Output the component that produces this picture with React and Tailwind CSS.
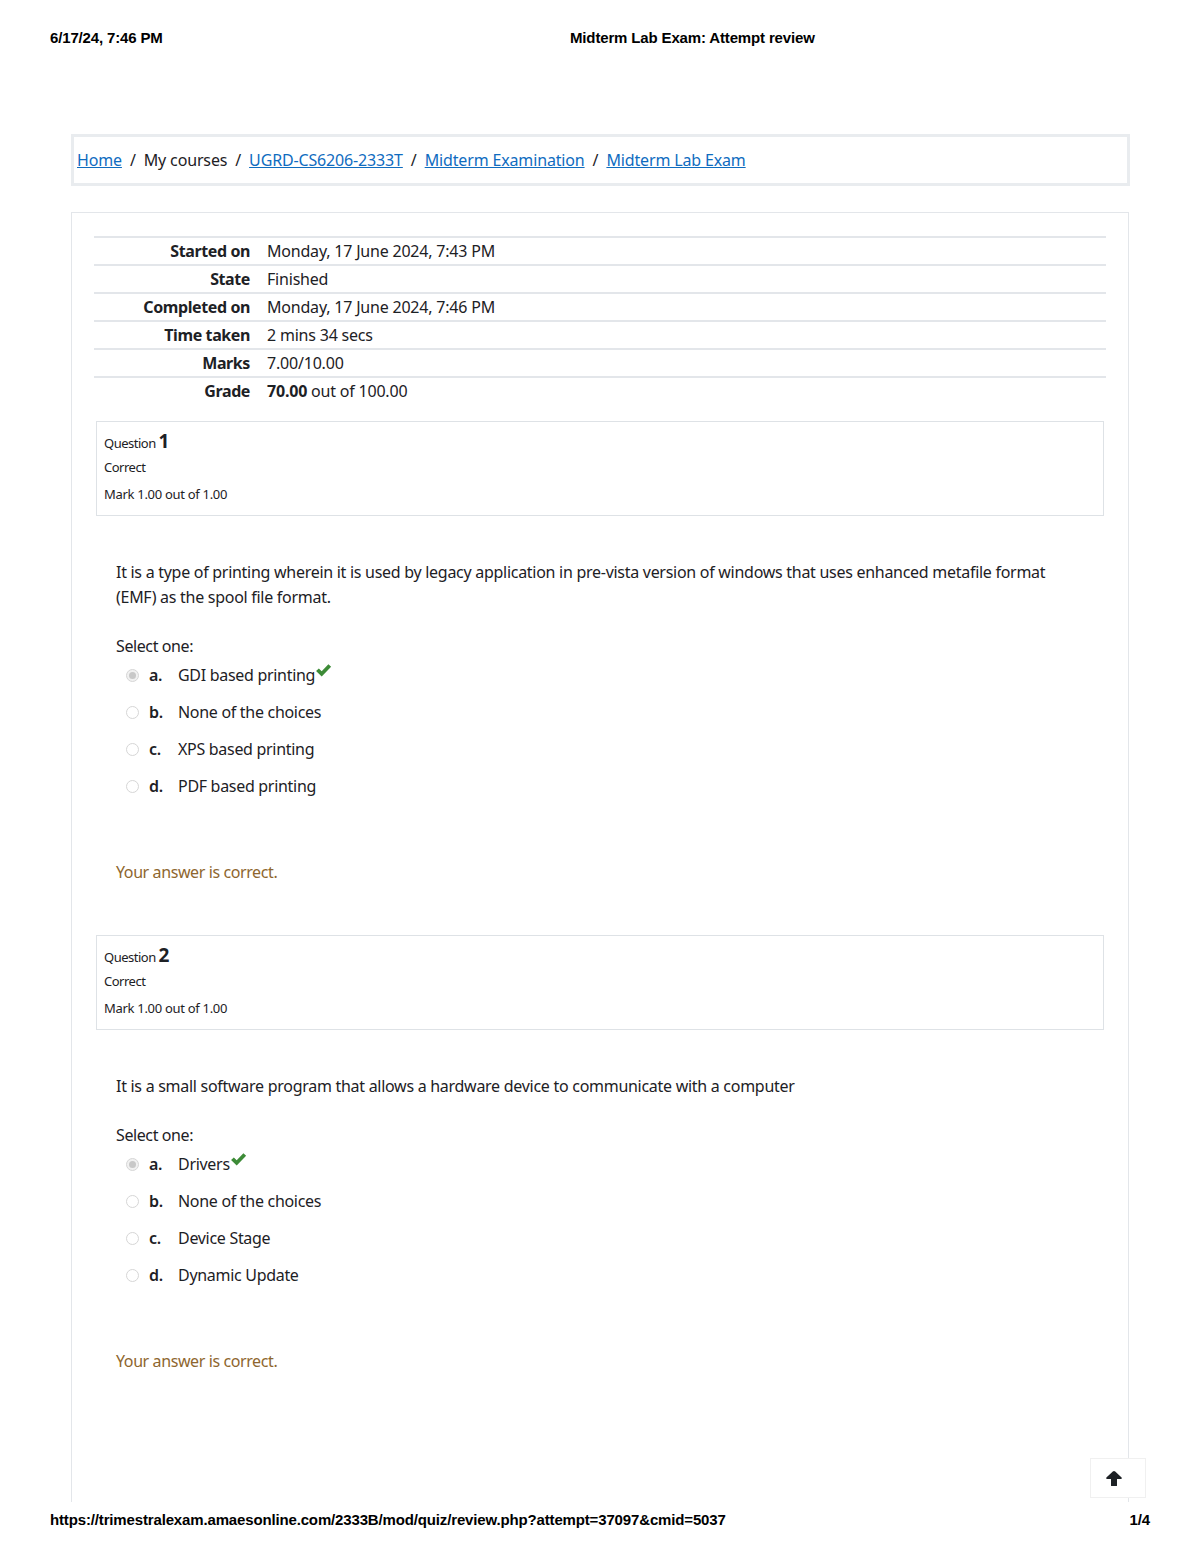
import React from 'react'

const font = { fontFamily: '"Noto Sans", "Open Sans", sans-serif' }

const summary = [
  { label: 'Started on', value: 'Monday, 17 June 2024, 7:43 PM' },
  { label: 'State', value: 'Finished' },
  { label: 'Completed on', value: 'Monday, 17 June 2024, 7:46 PM' },
  { label: 'Time taken', value: '2 mins 34 secs' },
  { label: 'Marks', value: '7.00/10.00' },
  { label: 'Grade', value: null },
]

const questions = [
  {
    num: 1,
    text: 'It is a type of printing wherein it is used by legacy application in pre-vista version of windows that uses enhanced metafile format (EMF) as the spool file format.',
    options: ['GDI based printing', 'None of the choices', 'XPS based printing', 'PDF based printing'],
  },
  {
    num: 2,
    text: 'It is a small software program that allows a hardware device to communicate with a computer',
    options: ['Drivers', 'None of the choices', 'Device Stage', 'Dynamic Update'],
  },
]

const Check = () => (
  <svg viewBox="0 0 16 14" className="w-[17px] h-[15px] -mt-[10px] inline-block">
    <path d="M1 7.5 L3.6 5 L6.3 7.6 L12.6 1 L15.2 3.5 L6.3 12.6 Z" fill="#3d8b37" />
  </svg>
)

const Question = ({ q }) => (
  <div>
    <div className="mx-[2px] border border-[#dee2e6] px-[7px] pt-[8px] pb-[7px] text-[#1d2125]">
      <div className="text-[13px] leading-[22px] tracking-[-0.5px]">
        Question <span className="text-[19px] font-bold">{q.num}</span>
      </div>
      <div className="text-[13px] leading-[26px] tracking-[-0.5px]">Correct</div>
      <div className="text-[13px] leading-[28px] tracking-[-0.3px]">Mark 1.00 out of 1.00</div>
    </div>
    <div className="px-[22px] pt-[44px] text-[16px] text-[#1d2125]">
      <p className="leading-[25px] tracking-[-0.28px] max-w-[950px]">{q.text}</p>
      <p className="mt-[24px] leading-[25px] tracking-[-0.4px]">Select one:</p>
      <div className="-mt-[2px] flex flex-col">
        {q.options.map((opt, i) => (
          <div key={i} className="flex items-center h-[37px] tracking-[-0.3px]">
            <span
              className={`ml-[10px] w-[13px] h-[13px] rounded-full border border-[#d6d6d6] flex items-center justify-center ${
                i === 0 ? 'bg-[#f1f1f1]' : 'bg-white'
              }`}
            >
              {i === 0 && <span className="w-[7px] h-[7px] rounded-full bg-[#c8c8c8]"></span>}
            </span>
            <span className="ml-[10px] w-[29px] font-semibold">{'abcd'[i]}.</span>
            <span>{opt}</span>
            {i === 0 && <Check />}
          </div>
        ))}
      </div>
      <p className="mt-[55px] text-[#8e662e] tracking-[-0.4px] leading-[25px]">Your answer is correct.</p>
    </div>
  </div>
)

export default function App() {
  return (
    <div className="relative w-[1200px] h-[1553px] bg-white overflow-hidden" style={font}>
      {/* print header */}
      <div
        className="flex px-[50px] pt-[27px] text-[15px] font-bold text-black tracking-[-0.15px]"
        style={{ fontFamily: '"Liberation Sans", Arial, sans-serif' }}
      >
        <span className="w-[520px]">6/17/24, 7:46 PM</span>
        <span>Midterm Lab Exam: Attempt review</span>
      </div>

      {/* breadcrumb */}
      <div className="mx-[71px] mt-[84px] w-[1059px] h-[52px] border-[3px] border-[#e9ecef] flex items-center px-[3px] text-[16px] tracking-[-0.15px]">
        <a className="text-[#0f6cbf] underline">Home</a>
        <span className="mx-[8px] text-[#1d2125]">/</span>
        <span className="text-[#1d2125]">My courses</span>
        <span className="mx-[8px] text-[#1d2125]">/</span>
        <a className="text-[#0f6cbf] underline">UGRD-CS6206-2333T</a>
        <span className="mx-[8px] text-[#1d2125]">/</span>
        <a className="text-[#0f6cbf] underline">Midterm Examination</a>
        <span className="mx-[8px] text-[#1d2125]">/</span>
        <a className="text-[#0f6cbf] underline">Midterm Lab Exam</a>
      </div>

      {/* main card */}
      <div className="mx-[71px] mt-[26px] w-[1058px] h-[1290px] border border-b-0 border-[#e3e6ea] px-[22px] pt-[23px]">
        <table className="w-full text-[16px] text-[#1d2125] tracking-[-0.2px]">
          <tbody>
            {summary.map((r, i) => (
              <tr key={i} className="border-t-2 border-[#e3e6ea]">
                <th className="w-[173px] text-right font-bold pr-[17px] h-[26px] leading-[26px] tracking-[-0.4px]">{r.label}</th>
                <td className="leading-[26px]">
                  {r.value ?? (
                    <>
                      <b>70.00</b> out of 100.00
                    </>
                  )}
                </td>
              </tr>
            ))}
          </tbody>
        </table>

        <div className="mt-[17px]">
          <Question q={questions[0]} />
        </div>
        <div className="mt-[50px]">
          <Question q={questions[1]} />
        </div>
      </div>

      {/* back to top */}
      <div className="absolute left-[1090px] top-[1458px] w-[56px] h-[40px] bg-white border border-[#f0f0f0] flex items-center pl-[14px]">
        <svg viewBox="0 0 18 17" className="w-[18px] h-[17px]">
          <path d="M9 1 Q9.6 1 10.2 1.6 L16.6 7.6 Q17.4 8.6 16.2 9 H12 V15.4 Q12 16 11.4 16 H6.6 Q6 16 6 15.4 V9 H1.8 Q0.6 8.6 1.4 7.6 L7.8 1.6 Q8.4 1 9 1 Z" fill="#1d2125" />
        </svg>
      </div>

      {/* print footer */}
      <div
        className="absolute left-0 top-[1509px] w-full flex justify-between px-[50px] text-[15px] font-bold text-black tracking-[-0.15px]"
        style={{ fontFamily: '"Liberation Sans", Arial, sans-serif' }}
      >
        <span>https://trimestralexam.amaesonline.com/2333B/mod/quiz/review.php?attempt=37097&amp;cmid=5037</span>
        <span>1/4</span>
      </div>
    </div>
  )
}
